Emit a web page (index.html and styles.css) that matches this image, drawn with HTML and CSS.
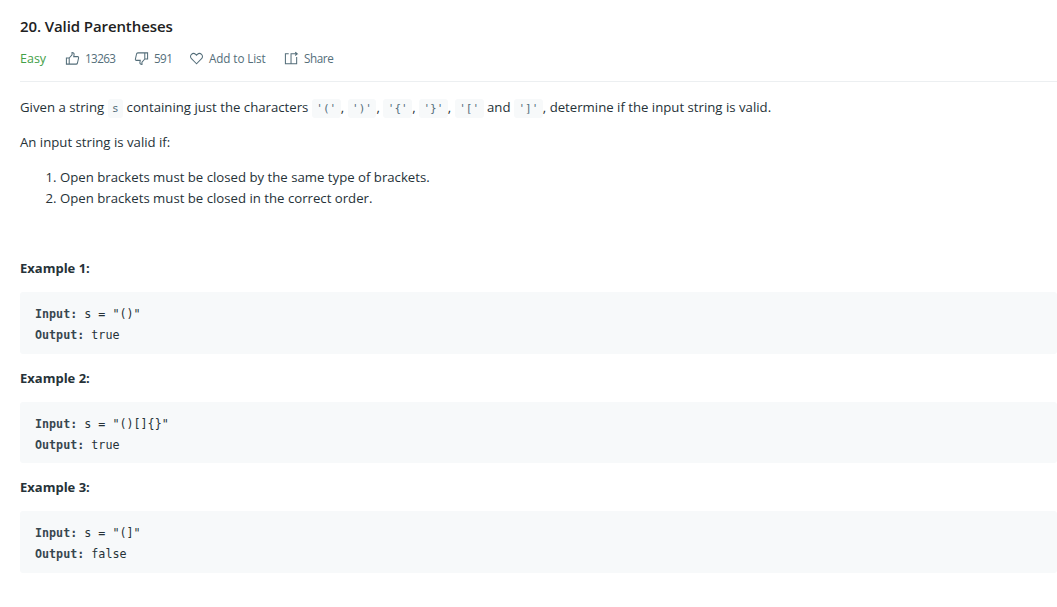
FILE: index.html
```html
<!DOCTYPE html>
<html lang="en">
<head>
<meta charset="utf-8">
<title>20. Valid Parentheses</title>
<link rel="stylesheet" href="styles.css">
</head>
<body>
<main class="page">
  <header class="head">
    <h1 class="title">20. Valid Parentheses</h1>
    <div class="meta">
      <span class="easy">Easy</span>
      <span class="action a-like">
        <svg class="icon" viewBox="0 0 16 16"><path d="M1.500 7.500h3v6.500h-3zM4.500 7.500 7.500 4V1.600c1.600 0 2.300 1 2.200 2.200L9.300 6h4.200c.8 0 1.200.7 1 1.400l-1.200 5.400c-.2.8-.7 1.200-1.400 1.200H4.500"/></svg>
        <span class="num">13263</span>
      </span>
      <span class="action a-dislike">
        <svg class="icon" viewBox="0 0 16 16"><path d="M14.500 8.500h-3V2h3zM11.500 8.500 8.500 12v2.400c-1.600 0-2.300-1-2.200-2.200L6.700 10H2.500c-.8 0-1.200-.7-1-1.400l1.200-5.400C2.900 2.400 3.400 2 4.100 2h7.400"/></svg>
        <span class="num">591</span>
      </span>
      <span class="action a-list">
        <svg class="icon" viewBox="0 0 16 16"><path d="M8 13.600 2.600 8.200a3.200 3.200 0 0 1 0-4.600 3.200 3.200 0 0 1 4.500 0l.9.900.9-.9a3.200 3.200 0 0 1 4.500 0 3.200 3.200 0 0 1 0 4.600z"/></svg>
        <span class="label">Add to List</span>
      </span>
      <span class="action a-share">
        <svg class="icon" viewBox="0 0 16 16"><path d="M5 3H1.500v10.500h12V6.500M7.500 13.500V3H14l-2-1.800M14 3l-2 1.800"/></svg>
        <span class="label">Share</span>
      </span>
    </div>
  </header>
  <section class="body">
    <p class="para">Given a string <code>s</code> containing just the characters <code>'('</code>, <code>')'</code>, <code>'{'</code>, <code>'}'</code>, <code>'['</code> and <code>']'</code>, determine if the input string is valid.</p>
    <p class="para">An input string is valid if:</p>
    <ol class="rules">
      <li>Open brackets must be closed by the same type of brackets.</li>
      <li>Open brackets must be closed in the correct order.</li>
    </ol>
    <h2 class="ex ex-first">Example 1:</h2>
    <pre class="box"><b>Input:</b> s = "()"
<b>Output:</b> true</pre>
    <h2 class="ex">Example 2:</h2>
    <pre class="box"><b>Input:</b> s = "()[]{}"
<b>Output:</b> true</pre>
    <h2 class="ex">Example 3:</h2>
    <pre class="box"><b>Input:</b> s = "(]"
<b>Output:</b> false</pre>
  </section>
</main>
</body>
</html>
```
FILE: styles.css
```css
html, body { margin: 0; padding: 0; background: #fff; overflow: hidden; }
body { font-family: "Open Sans", "Noto Sans", sans-serif; color: #263238; }
.page { width: 1057px; height: 607px; padding: 16px 0 0 20px; box-sizing: border-box; }
.title { margin: 0; font-size: 15px; line-height: 20px; font-weight: 600; color: #212121; letter-spacing: -0.1px; }
.meta { display: flex; align-items: center; height: 20px; margin-top: 12px; font-size: 11.700px; color: #546e7a; padding-bottom: 13px; border-bottom: 1px solid #eceff1; }
.easy { color: #43a047; font-size: 12.500px; width: 45px; }
.action { display: inline-flex; align-items: center; gap: 5px; }
.num { letter-spacing: -0.6px; }
.label { letter-spacing: -0.1px; }
.a-like { width: 69px; }
.a-dislike { width: 55px; }
.a-list { width: 95px; }
.a-share .label { letter-spacing: -0.4px; }
.icon { width: 15px; height: 15px; fill: none; stroke: #546e7a; stroke-width: 1.100; }
.body { font-size: 13.200px; line-height: 21px; }
.para { margin: 15px 0 0; }
.para + .para { margin-top: 13px; }
code { font-family: "DejaVu Sans Mono", monospace; font-size: 11px; color: #546e7a; background: #f7f9fa; padding: 3px 4.500px; border-radius: 3px; }
.rules { margin: 14px 0 0; padding-left: 40px; }
.ex { margin: 0; font-size: 13px; line-height: 21px; font-weight: 700; color: #263238; padding-top: 14px; }
.ex-first { padding-top: 49.400px; }
.box { margin: 12.900px 0 0; padding: 12px 15px 7.600px; line-height: 21px; background: #f7f9fa; border-radius: 3px; font-family: "DejaVu Sans Mono", monospace; font-size: 11.700px; color: #263238; }
.box b { font-weight: 700; color: #37474f; }
```
